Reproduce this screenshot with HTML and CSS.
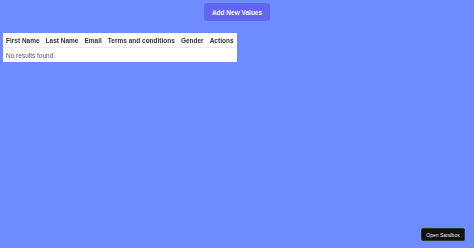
FILE: index.html
```html
<!DOCTYPE html>
<html>
<head>
<meta charset="utf-8">
<link rel="stylesheet" href="styles.css">
</head>
<body>
<div class="page">
  <div class="toolbar">
    <button class="add-btn">Add New Values</button>
  </div>
  <table class="grid">
    <thead>
      <tr>
        <th>First Name</th>
        <th>Last Name</th>
        <th>Email</th>
        <th>Terms and conditions</th>
        <th>Gender</th>
        <th>Actions</th>
      </tr>
    </thead>
    <tbody>
      <tr><td colspan="6">No results found</td></tr>
    </tbody>
  </table>
</div>
<button class="sandbox">Open Sandbox</button>
</body>
</html>
```
FILE: styles.css
```css
html, body {
  margin: 0;
  padding: 0;
  height: 100%;
  background: #6f8cff;
  font-family: "Liberation Sans", Arial, sans-serif;
  -webkit-font-smoothing: antialiased;
}
.page {
  padding: 3px 3px;
}
.toolbar {
  display: flex;
  justify-content: center;
}
.add-btn {
  background: #6366f1;
  color: #f4f4ff;
  border: none;
  border-radius: 3px;
  font-family: inherit;
  font-weight: 700;
  font-size: 6.5px;
  height: 18px;
  width: 66px;
  padding: 0;
}
.grid {
  margin-top: 12px;
  background: #fff;
  border-collapse: collapse;
  font-size: 6.5px;
  color: #333;
  will-change: transform;
}
.grid th {
  font-weight: 700;
  color: #333;
  text-align: left;
  padding: 0 3px;
  height: 14px;
  border-bottom: 1px solid #ececec;
  white-space: nowrap;
}
.grid td {
  padding: 0 3px;
  height: 14px;
  color: #555;
}
.sandbox {
  position: fixed;
  right: 9px;
  bottom: 7px;
  background: #111;
  color: #eee;
  border: 1px solid #333;
  border-radius: 2px;
  font-family: inherit;
  font-size: 5px;
  height: 13px;
  width: 44px;
  padding: 0;
}
```
